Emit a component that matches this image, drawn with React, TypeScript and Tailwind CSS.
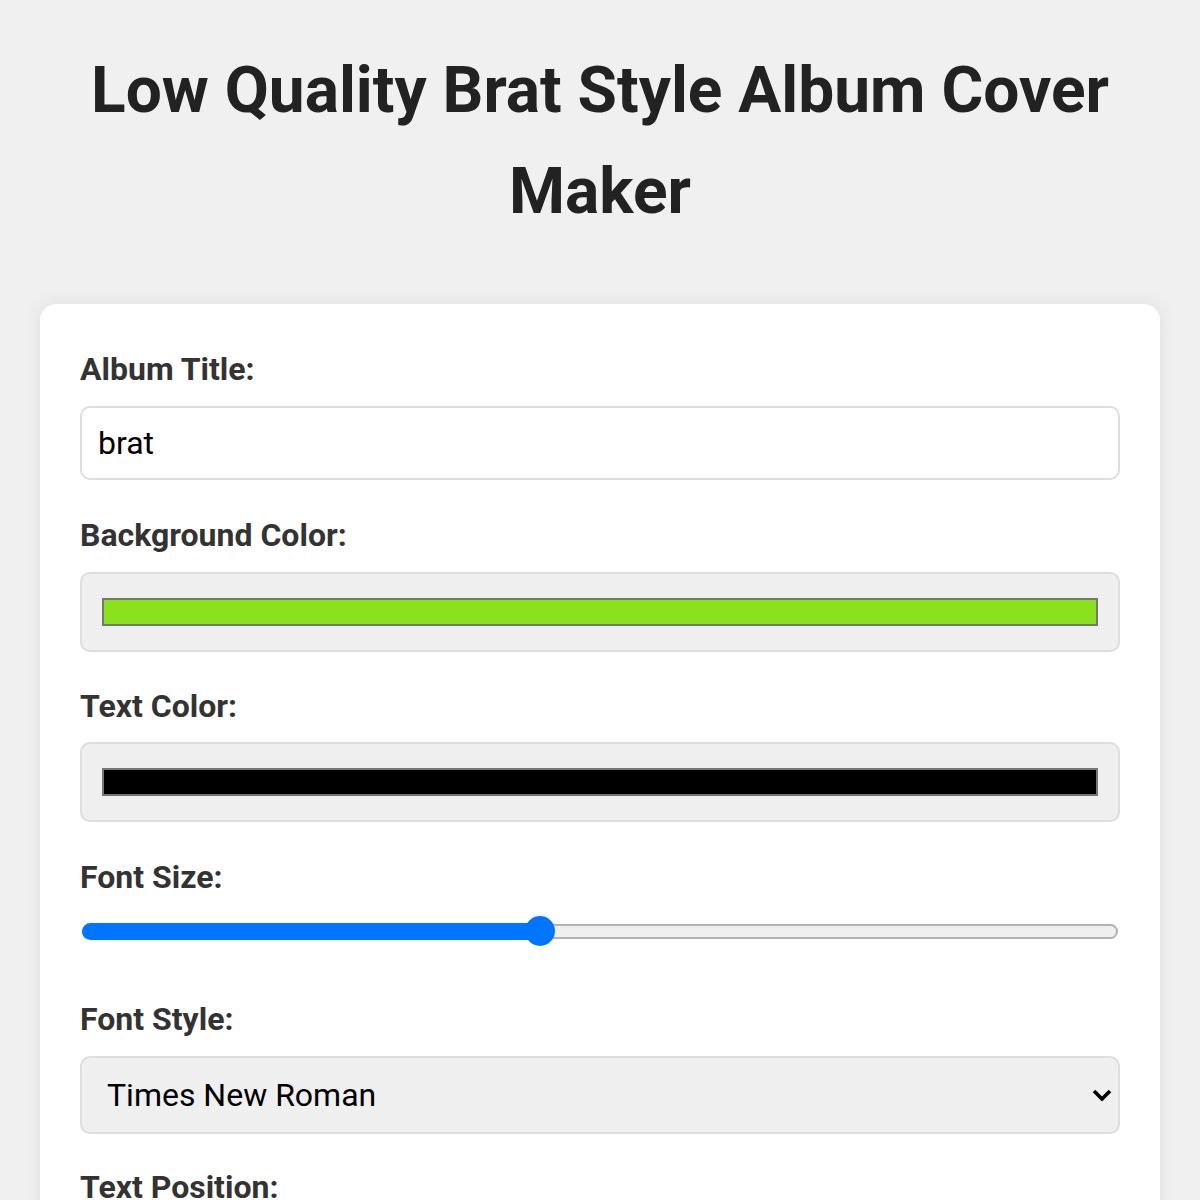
import React from "react";

function Label({ children }: { children: React.ReactNode }) {
  return (
    <div className="text-[32px] leading-[36px] font-bold text-[#333333]">{children}</div>
  );
}

function ColorBox({ color }: { color: string }) {
  return (
    <div className="h-[80px] rounded-[10px] border-2 border-[#dddddd] bg-[#efefef] px-[20px] flex items-center">
      <div className="h-[28px] w-full border-2 border-[#767676]" style={{ backgroundColor: color }} />
    </div>
  );
}

export default function App() {
  const pct = 44.2;
  return (
    <div className="min-h-[1200px] bg-[#f0f0f0] font-['Roboto',sans-serif] pt-[40px] px-[40px]">
      <h1 className="text-center text-[64px] leading-[101px] font-bold text-[#222222] px-[40px]">
        Low Quality Brat Style Album Cover Maker
      </h1>
      <div className="mt-[62px] bg-white rounded-[16px] shadow-[0_0_20px_rgba(0,0,0,0.08)] px-[40px] pt-[47px] pb-[40px]">
        <Label>Album Title:</Label>
        <div className="mt-[19px] h-[74px] rounded-[10px] border-2 border-[#dddddd] bg-white flex items-center px-[16px] text-[32px] text-black">
          brat
        </div>
        <div className="mt-[37px]">
          <Label>Background Color:</Label>
        </div>
        <div className="mt-[19px]">
          <ColorBox color="#8ae21e" />
        </div>
        <div className="mt-[36px]">
          <Label>Text Color:</Label>
        </div>
        <div className="mt-[18px]">
          <ColorBox color="#000000" />
        </div>
        <div className="mt-[37px]">
          <Label>Font Size:</Label>
        </div>
        <div className="mt-[16px] relative h-[40px] mx-[2px]">
          <div className="absolute left-0 right-0 top-[13px] h-[15px] rounded-full border-2 border-[#b2b2b2] bg-[#efefef]" />
          <div
            className="absolute left-0 top-[12px] h-[17px] rounded-l-full bg-[#0075ff]"
            style={{ width: `${pct}%` }}
          />
          <div
            className="absolute top-[5px] h-[30px] w-[30px] -ml-[15px] rounded-full bg-[#0075ff]"
            style={{ left: `${pct}%` }}
          />
        </div>
        <div className="mt-[50px]">
          <Label>Font Style:</Label>
        </div>
        <div className="mt-[19px] h-[78px] rounded-[10px] border-2 border-[#dddddd] bg-[#efefef] flex items-center justify-between pl-[25px] pr-[5px] text-[32px] text-black">
          <span>Times New Roman</span>
          <svg width="22" height="14" viewBox="0 0 22 14" fill="none">
            <path d="M3 3l8 8 8-8" stroke="#000" strokeWidth="3.6" />
          </svg>
        </div>
        <div className="mt-[35px]">
          <Label>Text Position:</Label>
        </div>
        <div className="h-[200px]" />
      </div>
    </div>
  );
}
